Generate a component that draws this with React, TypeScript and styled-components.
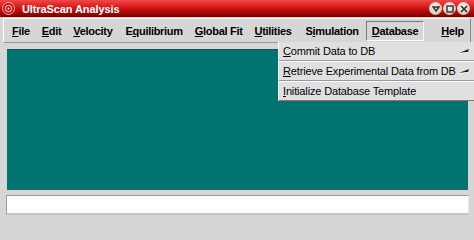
import * as React from "react"
import styled, { createGlobalStyle } from "styled-components"

const GlobalStyle = createGlobalStyle`
  html, body {
    margin: 0;
    padding: 0;
    background: #d6d6d6;
  }
`

const Window = styled.div`
  box-sizing: border-box;
  width: 474px;
  height: 220px;
  background: #d6d6d6;
  display: flex;
  flex-direction: column;
  position: relative;
  font-family: "Liberation Sans", Arial, sans-serif;
  overflow: hidden;
`

const TitleBar = styled.div`
  height: 17px;
  flex-shrink: 0;
  display: flex;
  align-items: center;
  padding: 0 4px 0 2px;
  background: linear-gradient(to bottom, #f04848 0%, #d81c1c 40%, #b00808 70%, #780000 100%);
  color: #ffffff;
  font-size: 11px;
  font-weight: bold;
`

const TitleText = styled.span`
  margin-left: 7px;
  flex: 1;
  letter-spacing: -0.1px;
`

const WinButtons = styled.div`
  display: flex;
  gap: 1px;
  align-items: center;
`

const WinButton = styled.span`
  width: 13px;
  height: 13px;
  border-radius: 50%;
  background: radial-gradient(circle at 40% 35%, #fbf4ec 0%, #dccbbb 65%, #a89484 100%);
  display: flex;
  align-items: center;
  justify-content: center;
`

const Body = styled.div`
  flex: 1;
  display: flex;
  flex-direction: column;
  padding: 0 6px 5px 7px;
`

const MenuBar = styled.div`
  height: 25px;
  flex-shrink: 0;
  box-sizing: border-box;
  margin: 1px -3px 0 -4px;
  display: flex;
  align-items: center;
  padding-left: 2px;
  border-top: 1px solid #ffffff;
  border-left: 1px solid #ffffff;
  border-bottom: 1px solid #9a9a9a;
  border-right: 1px solid #8a8a8a;
`

const MenuItem = styled.span<{ $active?: boolean; $gap?: number }>`
  font-size: 11px;
  font-weight: bold;
  letter-spacing: -0.3px;
  color: #000000;
  padding: 3px 5px 3px 5px;
  margin-left: ${(p) => p.$gap ?? 0}px;
  border: 1px solid ${(p) => (p.$active ? "#f8f8f8" : "transparent")};
  border-top-color: ${(p) => (p.$active ? "#7a7a7a" : "transparent")};
  border-left-color: ${(p) => (p.$active ? "#7a7a7a" : "transparent")};
  white-space: nowrap;
`

const Key = styled.span`
  text-decoration: underline;
`

const Canvas = styled.div`
  margin-top: 6px;
  flex: 1;
  background: #00746f;
  border-top: 1px solid #00605b;
`

const StatusLine = styled.div`
  margin: 5px -1px 0 -1px;
  height: 20px;
  flex-shrink: 0;
  box-sizing: border-box;
  background: #ffffff;
  border-top: 1px solid #9a9a9a;
  border-left: 1px solid #9a9a9a;
  border-bottom: 2px solid #c4c4c4;
  border-right: 1px solid #e8e8e8;
`

const Dropdown = styled.div`
  position: absolute;
  left: 278px;
  top: 42px;
  width: 198px;
  box-sizing: border-box;
  background: #e0e0e0;
  border-left: 1px solid #ffffff;
  border-bottom: 1px solid #7a7a7a;
`

const DropItem = styled.div`
  display: flex;
  align-items: center;
  height: 18px;
  padding: 0 6px 0 4px;
  font-size: 11px;
  letter-spacing: -0.15px;
  color: #000000;
  white-space: nowrap;
`

const DropLabel = styled.span`
  flex: 1;
`

const Separator = styled.div`
  height: 0;
  border-top: 1px solid #9a9a9a;
  border-bottom: 1px solid #ffffff;
`

const Arrow = () => (
  <svg width="12" height="8" viewBox="0 0 12 8">
    <path d="M1 6 L11 2 L10 5 Z" fill="#202020" />
    <path d="M1 6.6 L10 5.6" stroke="#ffffff" strokeWidth="0.8" />
  </svg>
)

const AppIcon = () => (
  <svg width="13" height="13" viewBox="0 0 13 13">
    <circle cx="6.5" cy="6.5" r="6" fill="#c81414" stroke="#ffa8a8" strokeWidth="1" />
    <circle cx="6.5" cy="6.5" r="3.2" fill="none" stroke="#ffd0d0" strokeWidth="1" />
    <circle cx="6.5" cy="6.5" r="1" fill="#ffe0e0" />
  </svg>
)

const App: React.FC = () => {
  return (
    <Window>
      <GlobalStyle />
      <TitleBar>
        <AppIcon />
        <TitleText>UltraScan Analysis</TitleText>
        <WinButtons>
          <WinButton>
            <svg width="8" height="8" viewBox="0 0 8 8">
              <path d="M1 2 L7 2 L4 6 Z" fill="none" stroke="#303030" strokeWidth="1.4" />
            </svg>
          </WinButton>
          <WinButton>
            <svg width="8" height="8" viewBox="0 0 8 8">
              <rect x="1" y="1" width="6" height="6" fill="none" stroke="#303030" strokeWidth="1.4" />
            </svg>
          </WinButton>
          <WinButton>
            <svg width="8" height="8" viewBox="0 0 8 8">
              <path d="M1 1 L7 7 M7 1 L1 7" stroke="#303030" strokeWidth="1.6" />
            </svg>
          </WinButton>
        </WinButtons>
      </TitleBar>
      <Body>
        <MenuBar>
          <MenuItem>
            <Key>F</Key>ile
          </MenuItem>
          <MenuItem>
            <Key>E</Key>dit
          </MenuItem>
          <MenuItem>
            <Key>V</Key>elocity
          </MenuItem>
          <MenuItem $gap={1}>
            E<Key>q</Key>uilibrium
          </MenuItem>
          <MenuItem>
            <Key>G</Key>lobal Fit
          </MenuItem>
          <MenuItem>
            <Key>U</Key>tilities
          </MenuItem>
          <MenuItem $gap={2}>
            S<Key>i</Key>mulation
          </MenuItem>
          <MenuItem $active $gap={1}>
            <Key>D</Key>atabase
          </MenuItem>
          <MenuItem $gap={11}>
            <Key>H</Key>elp
          </MenuItem>
        </MenuBar>
        <Canvas />
        <StatusLine />
      </Body>
      <Dropdown>
        <DropItem>
          <DropLabel>
            <Key>C</Key>ommit Data to DB
          </DropLabel>
          <Arrow />
        </DropItem>
        <Separator />
        <DropItem>
          <DropLabel>
            <Key>R</Key>etrieve Experimental Data from DB
          </DropLabel>
          <Arrow />
        </DropItem>
        <Separator />
        <DropItem>
          <DropLabel>
            <Key>I</Key>nitialize Database Template
          </DropLabel>
        </DropItem>
      </Dropdown>
    </Window>
  )
}

export default App
